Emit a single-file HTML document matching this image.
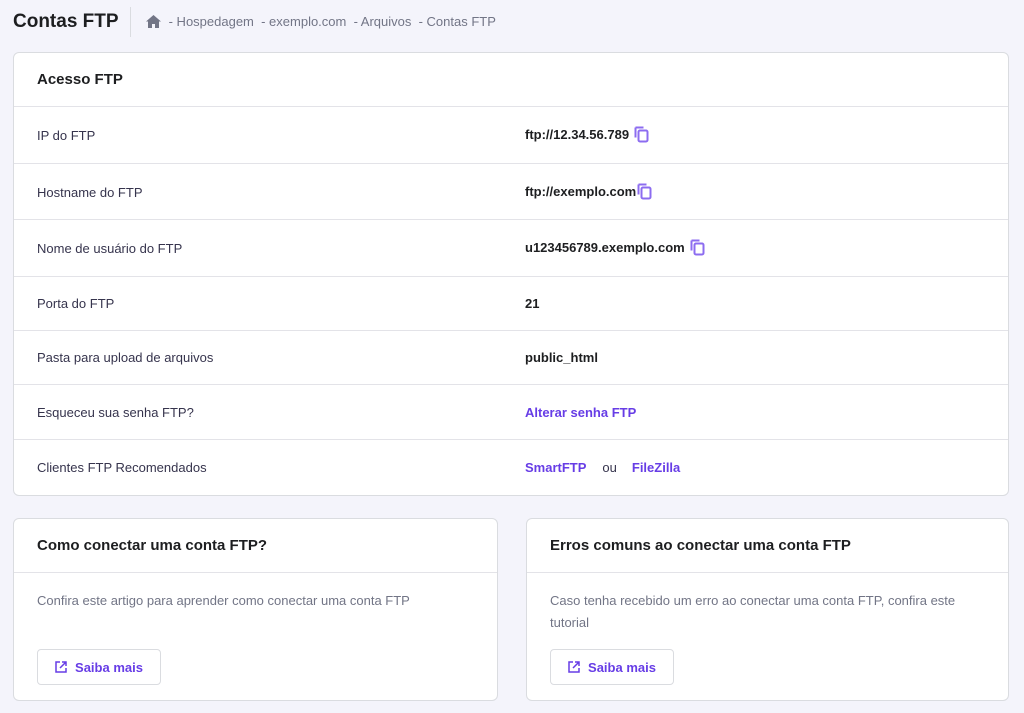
<!DOCTYPE html>
<html><head><meta charset="utf-8"><style>
*{box-sizing:border-box;margin:0;padding:0}
body{width:1024px;height:713px;background:#f4f4fb;font-family:"Liberation Sans",sans-serif;color:#36344d;position:relative;overflow:hidden}
.title{position:absolute;left:13px;top:11px;font-size:19px;font-weight:bold;color:#1d1e20}
.div{position:absolute;left:130px;top:7px;width:1px;height:30px;background:#dadce0}
.bc{position:absolute;left:146px;top:14px;font-size:13px;color:#727586;display:flex;align-items:center;gap:4px}
.card{position:absolute;background:#fff;border:1px solid #dadce0;border-radius:6px}
.row{position:absolute;left:0;right:0;border-top:1px solid #e3e3e8;font-size:13px}
.row .l{position:absolute;left:23px}
.row .v{position:absolute;left:511px;font-weight:bold;color:#1d1e20;display:flex;align-items:center}
.p{color:#673de6;font-weight:bold}
.h{position:absolute;left:23px;font-size:15px;font-weight:bold;color:#1d1e20}
.txt{position:absolute;left:23px;top:71px;font-size:13px;color:#727586;line-height:22px;width:440px}
.btn{position:absolute;left:23px;top:130px;width:124px;height:36px;border:1px solid #dadce0;border-radius:4px;display:flex;align-items:center;justify-content:center;gap:8px;font-size:13px;font-weight:bold;color:#673de6}
</style></head><body>
<div class="title">Contas FTP</div><div class="div"></div>
<div class="bc"><svg width="15" height="13" viewBox="0 0 15 13"><path d="M7.5 0L0 6.5h2V13h4V9h3v4h4V6.5h2z" fill="#727586"/></svg>&nbsp;- Hospedagem &nbsp;- exemplo.com &nbsp;- Arquivos &nbsp;- Contas FTP</div>

<div class="card" style="left:13px;top:52px;width:996px;height:444px">
<div class="h" style="top:18px">Acesso FTP</div>
<div class="row" style="top:53px;height:57px"><span class="l" style="top:21px">IP do FTP</span><span class="v" style="top:19px">ftp://12.34.56.789 <svg style="margin-left:5px" width="15" height="17" viewBox="0 0 15 17"><path d="M1.5 1.5h8M1.5 1.5v10" stroke="#8c6cf0" stroke-width="2" fill="none"/><rect x="4.5" y="4.5" width="9" height="11" rx="1.5" stroke="#8c6cf0" stroke-width="2" fill="none"/></svg></span></div>
<div class="row" style="top:110px;height:56px"><span class="l" style="top:21px">Hostname do FTP</span><span class="v" style="top:19px">ftp://exemplo.com<svg style="margin-left:1px" width="15" height="17" viewBox="0 0 15 17"><path d="M1.5 1.5h8M1.5 1.5v10" stroke="#8c6cf0" stroke-width="2" fill="none"/><rect x="4.5" y="4.5" width="9" height="11" rx="1.5" stroke="#8c6cf0" stroke-width="2" fill="none"/></svg></span></div>
<div class="row" style="top:166px;height:57px"><span class="l" style="top:21px">Nome de usuário do FTP</span><span class="v" style="top:19px">u123456789.exemplo.com <svg style="margin-left:5px" width="15" height="17" viewBox="0 0 15 17"><path d="M1.5 1.5h8M1.5 1.5v10" stroke="#8c6cf0" stroke-width="2" fill="none"/><rect x="4.5" y="4.5" width="9" height="11" rx="1.5" stroke="#8c6cf0" stroke-width="2" fill="none"/></svg></span></div>
<div class="row" style="top:223px;height:54px"><span class="l" style="top:19px">Porta do FTP</span><span class="v" style="top:19px;left:511px">21</span></div>
<div class="row" style="top:277px;height:54px"><span class="l" style="top:19px">Pasta para upload de arquivos</span><span class="v" style="top:19px">public_html</span></div>
<div class="row" style="top:331px;height:55px"><span class="l" style="top:20px">Esqueceu sua senha FTP?</span><span class="v p" style="top:20px;color:#673de6">Alterar senha FTP</span></div>
<div class="row" style="top:386px;height:57px"><span class="l" style="top:20px">Clientes FTP Recomendados</span><span class="v" style="top:20px"><span class="p">SmartFTP</span><span style="font-weight:normal;margin:0 15px 0 16px;color:#36344d">ou</span><span class="p">FileZilla</span></span></div>
</div>

<div class="card" style="left:13px;top:518px;width:485px;height:183px">
<div class="h" style="top:18px">Como conectar uma conta FTP?</div>
<div class="row" style="top:53px"></div>
<div class="txt">Confira este artigo para aprender como conectar uma conta FTP</div>
<div class="btn"><svg width="12" height="12" viewBox="0 0 12 12"><path d="M5 1H1v10h10V7M7 1h4v4M11 1L5 7" stroke="#673de6" stroke-width="1.5" fill="none"/></svg>Saiba mais</div>
</div>
<div class="card" style="left:526px;top:518px;width:483px;height:183px">
<div class="h" style="top:18px">Erros comuns ao conectar uma conta FTP</div>
<div class="row" style="top:53px"></div>
<div class="txt">Caso tenha recebido um erro ao conectar uma conta FTP, confira este tutorial</div>
<div class="btn"><svg width="12" height="12" viewBox="0 0 12 12"><path d="M5 1H1v10h10V7M7 1h4v4M11 1L5 7" stroke="#673de6" stroke-width="1.5" fill="none"/></svg>Saiba mais</div>
</div>
</body></html>
